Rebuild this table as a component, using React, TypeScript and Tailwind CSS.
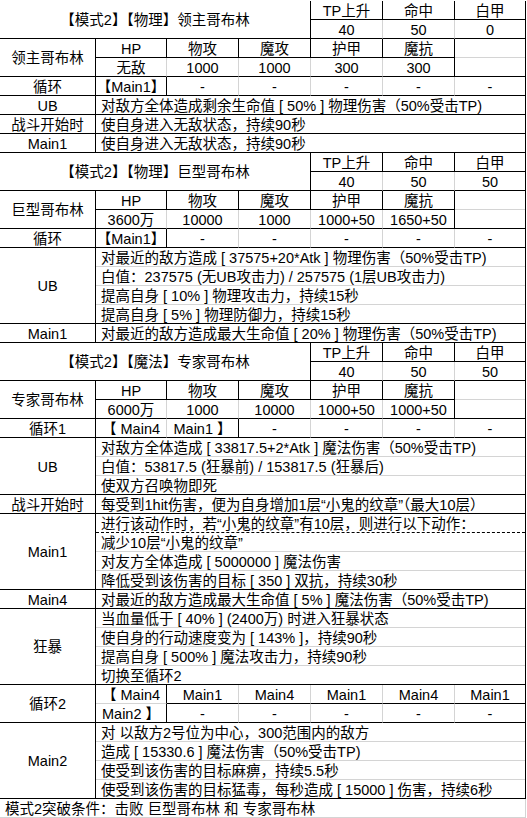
type Cell = {
  t?: string
  c?: 1 | 2 | 4 | 6
  rs?: 1 | 2 | 3 | 4
  r?: "k" | "g" | "n"
  b?: "k" | "g" | "d"
  l?: boolean
}

const colSpan = { 1: "", 2: "col-span-2", 4: "col-span-4", 6: "col-span-6" }
const rowSpan = { 1: "", 2: "row-span-2", 3: "row-span-3", 4: "row-span-4" }
const rightBorder = {
  k: "border-r border-r-black",
  g: "border-r border-r-[#d4d4d4]",
  n: "",
}
const bottomBorder = {
  k: "border-b border-b-black",
  g: "border-b border-b-[#d4d4d4]",
  d: "border-b border-dashed border-b-black",
}

// title block: merged name cell + TP/命中/白甲
const head = (title: string, tp: string, hit: string, armor: string): Cell[] => [
  { t: title, c: 4, rs: 2 },
  { t: "TP上升" },
  { t: "命中" },
  { t: "白甲", r: "n" },
  { t: tp, r: "g" },
  { t: hit, r: "g" },
  { t: armor, r: "n" },
]

const stats = (name: string, vals: string[]): Cell[] => [
  { t: name, rs: 2 },
  { t: "HP" },
  { t: "物攻" },
  { t: "魔攻" },
  { t: "护甲" },
  { t: "魔抗" },
  { r: "n", b: "g" },
  ...vals.map((v, i): Cell => ({ t: v, r: i === 4 ? "k" : "g" })),
  { r: "n" },
]

const dashes = (n: number): Cell[] =>
  Array.from({ length: n }, (_, i): Cell => ({ t: "-", r: i === n - 1 ? "n" : "g" }))

const block = (label: string, lines: string[], dashedFirst = false): Cell[] => [
  { t: label, rs: lines.length as 1 | 2 | 3 | 4 },
  ...lines.map(
    (t, i): Cell => ({
      t,
      c: 6,
      r: "n",
      l: true,
      b: i === lines.length - 1 ? "k" : dashedFirst && i === 0 ? "d" : "g",
    })
  ),
]

const cells: Cell[] = [
  // 领主哥布林
  ...head("【模式2】【物理】领主哥布林", "40", "50", "0"),
  ...stats("领主哥布林", ["无敌", "1000", "1000", "300", "300"]),
  { t: "循环" },
  { t: "【Main1】" },
  ...dashes(5),
  ...block("UB", ["对敌方全体造成剩余生命值 [ 50% ] 物理伤害（50%受击TP)"]),
  ...block("战斗开始时", ["使自身进入无敌状态，持续90秒"]),
  ...block("Main1", ["使自身进入无敌状态，持续90秒"]),

  // 巨型哥布林
  ...head("【模式2】【物理】巨型哥布林", "40", "50", "50"),
  ...stats("巨型哥布林", ["3600万", "10000", "1000", "1000+50", "1650+50"]),
  { t: "循环" },
  { t: "【Main1】" },
  ...dashes(5),
  ...block("UB", [
    "对最近的敌方造成 [ 37575+20*Atk ] 物理伤害（50%受击TP)",
    "白值：237575 (无UB攻击力) / 257575 (1层UB攻击力)",
    "提高自身 [ 10% ] 物理攻击力，持续15秒",
    "提高自身 [ 5% ] 物理防御力，持续15秒",
  ]),
  ...block("Main1", ["对最近的敌方造成最大生命值 [ 20% ] 物理伤害（50%受击TP)"]),

  // 专家哥布林
  ...head("【模式2】【魔法】专家哥布林", "40", "50", "50"),
  ...stats("专家哥布林", ["6000万", "1000", "10000", "1000+50", "1000+50"]),
  { t: "循环1" },
  { t: "【 Main4", r: "g" },
  { t: "Main1 】" },
  ...dashes(4),
  ...block("UB", [
    "对敌方全体造成 [ 33817.5+2*Atk ] 魔法伤害（50%受击TP)",
    "白值：53817.5 (狂暴前) / 153817.5 (狂暴后)",
    "使双方召唤物即死",
  ]),
  ...block("战斗开始时", ["每受到1hit伤害，便为自身增加1层“小鬼的纹章”（最大10层）"]),
  ...block(
    "Main1",
    [
      "进行该动作时，若“小鬼的纹章”有10层，则进行以下动作：",
      "减少10层“小鬼的纹章”",
      "对友方全体造成 [ 5000000 ] 魔法伤害",
      "降低受到该伤害的目标 [ 350 ] 双抗，持续30秒",
    ],
    true
  ),
  ...block("Main4", ["对最近的敌方造成最大生命值 [ 5% ] 魔法伤害（50%受击TP)"]),
  ...block("狂暴", [
    "当血量低于 [ 40% ] (2400万) 时进入狂暴状态",
    "使自身的行动速度变为 [ 143% ]，持续90秒",
    "提高自身 [ 500% ] 魔法攻击力，持续90秒",
    "切换至循环2",
  ]),
  { t: "循环2", rs: 2 },
  { t: "【 Main4", b: "g" },
  { t: "Main1", r: "g" },
  { t: "Main4", r: "g" },
  { t: "Main1", r: "g" },
  { t: "Main4", r: "g" },
  { t: "Main1", r: "n" },
  { t: "Main2 】" },
  ...dashes(5),
  ...block("Main2", [
    "对 以敌方2号位为中心，300范围内的敌方",
    "造成 [ 15330.6 ] 魔法伤害（50%受击TP)",
    "使受到该伤害的目标麻痹，持续5.5秒",
    "使受到该伤害的目标猛毒，每秒造成 [ 15000 ] 伤害，持续6秒",
  ]),
]

export default function App() {
  return (
    <div className="w-[527px] h-[818px] bg-white pt-[1px] text-black text-[14.5px] leading-[18px] font-['Liberation_Sans','Noto_Sans_CJK_SC',sans-serif]">
      <div className="w-[526px] grid grid-cols-[96px_71px_72px_72px_72px_72px_70px] auto-rows-[19px] border-r border-r-black">
        {cells.map((cell, i) => (
          <div
            key={i}
            className={[
              "flex items-center whitespace-nowrap overflow-hidden pt-[1px]",
              cell.l ? "justify-start pl-[5px]" : "justify-center",
              colSpan[cell.c ?? 1],
              rowSpan[cell.rs ?? 1],
              rightBorder[cell.r ?? "k"],
              bottomBorder[cell.b ?? "k"],
            ].join(" ")}
          >
            {cell.t}
          </div>
        ))}
      </div>
      <div className="w-[526px] h-[19px] flex items-center pl-[5px] pt-[1px] whitespace-nowrap border-b border-r border-[#d4d4d4]">
        模式2突破条件：击败 巨型哥布林 和 专家哥布林
      </div>
    </div>
  )
}
